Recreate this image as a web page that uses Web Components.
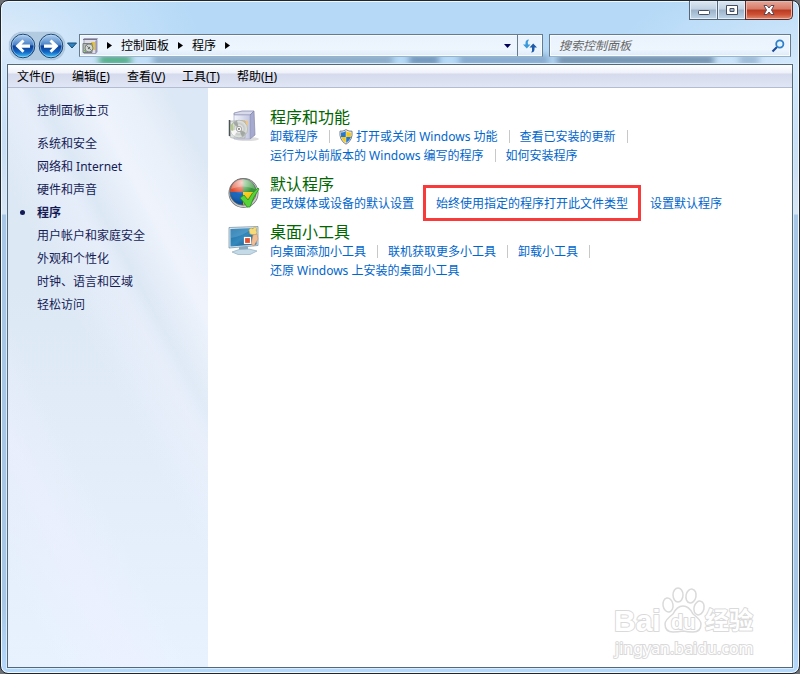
<!DOCTYPE html>
<html lang="zh-CN">
<head>
<meta charset="utf-8">
<title>程序</title>
<style>
    html { background: #6d7074; }
    body {
        margin: 0;
        font: 12px/19px "Noto Sans", "Noto Sans CJK SC", sans-serif;
        color: #000;
    }
</style>
</head>
<body>
<explorer-window>
    <caption-buttons slot="caption"></caption-buttons>
    <nav-bar slot="nav"></nav-bar>
    <menu-bar slot="menu"></menu-bar>
    <side-nav slot="side"></side-nav>

    <category-item icon="programs" heading="程序和功能">
        <link-row trail>
            <task-link>卸载程序</task-link>
            <task-link shield>打开或关闭 Windows 功能</task-link>
            <task-link>查看已安装的更新</task-link>
        </link-row>
        <link-row>
            <task-link>运行为以前版本的 Windows 编写的程序</task-link>
            <task-link>如何安装程序</task-link>
        </link-row>
    </category-item>
    <category-item icon="defaults" heading="默认程序">
        <link-row>
            <task-link>更改媒体或设备的默认设置</task-link>
            <task-link marked>始终使用指定的程序打开此文件类型</task-link>
            <task-link>设置默认程序</task-link>
        </link-row>
    </category-item>
    <category-item icon="gadgets" heading="桌面小工具">
        <link-row trail>
            <task-link>向桌面添加小工具</task-link>
            <task-link>联机获取更多小工具</task-link>
            <task-link>卸载小工具</task-link>
        </link-row>
        <link-row>
            <task-link>还原 Windows 上安装的桌面小工具</task-link>
        </link-row>
    </category-item>
    <site-mark slot="mark"></site-mark>
</explorer-window>

<script>
const ICONS = {
    programs: `<svg viewBox="0 0 32 32">
        <defs><linearGradient id="b" x2="1"><stop stop-color="#f4f5fb"/><stop offset="1" stop-color="#c3c7e0"/></linearGradient>
        <radialGradient id="d"><stop offset=".2" stop-color="#fff"/><stop offset=".6" stop-color="#c6cac7"/><stop offset="1" stop-color="#e8ebe9"/></radialGradient></defs>
        <ellipse cx="19" cy="29" rx="12" ry="2" fill="#bbb" opacity=".5"/>
        <path d="M6 3l8-2h12l-4 4H6z" fill="#d8daea" stroke="#7b80a6" stroke-width=".7"/>
        <path d="M22 5l4-4 1 24-5 4z" fill="#a5aace" stroke="#8388aa" stroke-width=".7"/>
        <path d="M6 5h16v24H6z" fill="url(#b)" stroke="#a3a8c6" stroke-width=".7"/>
        <path d="M13 10l7 1-1 12-4-3z" fill="#f0c680"/>
        <path d="M2 11h15v17H4l-2-1z" fill="#dde1df" opacity=".9" stroke="#909995" stroke-width=".6"/>
        <path d="M1.500 10v16" stroke="#4d5457" stroke-width="1.500"/>
        <ellipse cx="11" cy="19" rx="8.500" ry="8.800" fill="url(#d)" stroke="#a2a9a6" stroke-width=".6"/>
        <path d="M11 19L5 13q2-2 4-2.500zM11 19l7 4q-2 3-4 4z" fill="#8e9491" opacity=".7"/>
        <path d="M11 19l-8 2q1 4 3 5z" fill="#fff" opacity=".8"/>
        <path d="M3 15l2-2v8l-2-1z" fill="#a7c45a" opacity=".7"/>
        <circle cx="11" cy="19" r="2.700" fill="#f5f6f4" stroke="#777" stroke-width=".6"/>
        <circle cx="11" cy="19" r="1" fill="#777"/></svg>`,
    defaults: `<svg viewBox="0 0 32 32">
        <defs><radialGradient id="g" cx=".45" cy=".15" r=".75"><stop stop-color="#fff" stop-opacity=".7"/><stop offset=".6" stop-color="#fff" stop-opacity=".05"/><stop offset="1" stop-color="#000" stop-opacity=".15"/></radialGradient>
        <clipPath id="c"><circle cx="15" cy="15" r="13"/></clipPath></defs>
        <circle cx="15.500" cy="16" r="15" fill="#6c6f72"/><circle cx="15.500" cy="16" r="14.300" fill="#c9cbcc"/>
        <g clip-path="url(#c)"><path d="M0 0h15v15H0z" fill="#e0401f"/><path d="M15 0h17v15H15z" fill="#2e9230"/>
        <path d="M0 15h15v17H0z" fill="#0f5fb8"/><path d="M15 15h17v17H15z" fill="#fbc912"/></g>
        <circle cx="15" cy="15" r="13.200" fill="url(#g)" stroke="#555b5e" stroke-width=".7"/>
        <path d="M3 12Q5 2 15 2t12 10Q15 7 3 12z" fill="#fff" opacity=".25"/>
        <path d="M12 21l4-3 4 5Q24 15 30 11l1 1q-6 8-9 18h-3q-3-5-7-9z" fill="#56d338" stroke="#208d1d" stroke-width=".8"/></svg>`,
    gadgets: `<svg viewBox="0 0 32 32">
        <defs><linearGradient id="s" x2="1" y2="1"><stop stop-color="#1c699f"/><stop offset=".5" stop-color="#3589bd"/><stop offset="1" stop-color="#134a78"/></linearGradient></defs>
        <path d="M1 2.500l29-1v19L1 23z" fill="#dfe9f1" stroke="#6a899f" stroke-width=".7"/>
        <path d="M2.500 4l26-1v16.500l-26 2z" fill="url(#s)"/>
        <path d="M2.500 4l22-1Q16 11 2.500 13z" fill="#8bc8e9" opacity=".3"/>
        <path d="M11 22l9-.5v4h-9z" fill="#87aac2"/><path d="M4 27l7-2.500 10-.5 8 2-7 3.500H10z" fill="#c4dae7" stroke="#91afc1" stroke-width=".7"/>
        <path d="M21 5l2-2 2 1 1-2 3 1-1 2 1 3-2 2-5-1z" fill="#f6db7a" stroke="#d7ab47" stroke-width=".6"/>
        <path d="M25 10l4-1 1 5-4 7-3-2z" fill="#f0bd95" stroke="#c38c67" stroke-width=".5"/>
        <rect x="16.500" y="12.500" width="6" height="6" fill="#e2502f" stroke="#fff" stroke-width="1.200"/></svg>`,
    shield: `<svg viewBox="0 0 16 16">
        <path d="M8 .7q3 2 6 1.500 1 9-6 13-7-4-6-13 3 .5 6-1.500z" fill="#fff" stroke="#6f7b84"/>
        <path d="M7.800 2v6H3V3.500q2.500 0 4.800-1.500z" fill="#2877c9"/><path d="M8.200 2v6H13V3.500q-2.500 0-4.800-1.500z" fill="#f4c81e"/>
        <path d="M3 8h4.800v6Q4 11.500 3 8z" fill="#f4c81e"/><path d="M13 8H8.200v6Q12 11.500 13 8z" fill="#2877c9"/></svg>`,
    panel: `<svg viewBox="0 0 16 16"><path d="M2 .5h13.500L14 3v12.500H2z" fill="#dedde8" stroke="#a3a2b7"/><path d="M1 1.500h14" stroke="#767591"/>
        <path d="M13.500 3l2-1v12l-2 1.500z" fill="#9895ba"/><path d="M9 4h4v8H9z" fill="#e6c13a"/><path d="M1 5.500h9v9H1z" fill="#b5bab7" stroke="#777e7b"/>
        <circle cx="7" cy="10" r="4" fill="#d3d8d4" stroke="#7f8683"/><circle cx="7" cy="10" r="1.200" fill="#5f6663"/><path d="M4 7l3 3M7 10l3 3" stroke="#7e8582"/><path d="M2 12l2 2" stroke="#69b54b"/></svg>`,
};

const define = (name, template) => {
    customElements.define(name, class extends HTMLElement {
        constructor() {
            super();
            this.attachShadow({ mode: 'open' });
        }

        connectedCallback() {
            this.shadowRoot.innerHTML = typeof template === 'function' ? template(this) : template;
        }
    });
};

define('explorer-window', `
    <style>
        :host {
            box-sizing: border-box;
            display: flex;
            flex-direction: column;
            position: relative;
            min-height: 100vh;
            padding: 0 6px 5px;
            border: 1px solid #20262d;
            border-radius: 8px;
            overflow: hidden;
            background:
                radial-gradient(ellipse 200px 110px at 0 40px, #dcebfa 0, transparent 100%),
                radial-gradient(ellipse 190px 100px at 100% 70px, #d5e9fb 0, transparent 100%),
                linear-gradient(#b5d9f7 0, #b5d9f7 60px, #c6ddf4 140px, #d8e6f4 213px, #a8c6e5 214px, #a8c6e5 600px, #b5d9fc 100%);
            box-shadow: inset 0 0 0 1px #eff8ff;
        }
        header { display: flex; justify-content: flex-end; height: 33px; }
        /* what shows through the glass from behind the window */
        .ghost {
            position: absolute;
            left: 98px;
            right: 40px;
            top: 54px;
            height: 10px;
            filter: blur(3px);
            background: linear-gradient(90deg, #4eac83 0 32px, transparent 32px 54px, #89a9c7 54px 294px, transparent 294px 310px, #6f93b8 310px 340px, transparent 340px 360px, #83a7cb 360px 450px, transparent 450px 458px, #708fad 458px 615px, transparent 615px 640px, #9ab8d5 640px);
        }
        .client {
            position: relative;
            flex: 1;
            display: flex;
            flex-direction: column;
            margin-top: 7px;
            border: 1px solid #536878;
            box-shadow: 0 0 0 1px #d8ecfc;
            background: #fff;
        }
        .body { flex: 1; display: flex; }
        main { flex: 1; display: flex; flex-direction: column; gap: 9px; padding: 19px 20px; }
        ::slotted([slot="nav"]) { position: relative; }
    </style>
    <div class="ghost"></div>
    <header><slot name="caption"></slot></header>
    <slot name="nav"></slot>
    <div class="client">
        <slot name="menu"></slot>
        <div class="body">
            <slot name="side"></slot>
            <main><slot></slot></main>
        </div>
        <slot name="mark"></slot>
    </div>
`);

define('caption-buttons', `
    <style>
        :host { display: flex; align-self: flex-start; }
        button {
            display: grid;
            place-items: center;
            width: 28px;
            height: 19px;
            padding: 0;
            border: 1px solid #566676;
            border-top: 0;
            border-right: 0;
            background: linear-gradient(#dce8f3, #c1d1e1 45%, #9cb2c8 50%, #bfd5e9);
            box-shadow: inset 0 0 0 1px #e2eff9;
        }
        button:first-child { border-radius: 0 0 0 5px; }
        .close {
            width: 48px;
            border-right: 1px solid #592b29;
            border-color: #592b29;
            border-radius: 0 0 5px 0;
            background: linear-gradient(#e7a798, #d77a67 45%, #b83b21 50%, #ce5035 75%, #dd8b70);
            box-shadow: inset 0 0 0 1px #ecb6a8;
        }
        svg { width: 14px; height: 12px; }
    </style>
    <button aria-label="最小化"><svg viewBox="0 0 14 12"><rect x="1.500" y="6.500" width="11" height="4" rx="1" fill="#fff" stroke="#454d60"/></svg></button>
    <button aria-label="最大化"><svg viewBox="0 0 14 12"><path fill-rule="evenodd" d="M1.500 1.500h11v9h-11zM5 4.500h4v3H5z" fill="#fff" stroke="#454d60"/></svg></button>
    <button class="close" aria-label="关闭"><svg viewBox="0 0 14 12"><path d="M2 1.500h3L7 4l2-2.500h3L9.500 6l2.500 4.500H9L7 8l-2 2.500H2L4.500 6z" fill="#fff" stroke="#574b59"/></svg></button>
`);

define('nav-bar', `
    <style>
        :host { display: flex; align-items: center; height: 23px; padding: 0 2px; }
        button { padding: 0; border: 0; background: none; font: inherit; color: inherit; display: grid; place-items: center; }
        .travel { display: flex; gap: 2px; padding: 1px; margin: -3px 0; border-radius: 14px; background: #b3cbe0; box-shadow: 0 0 1px #7f9ab4; }
        .travel svg { width: 26px; height: 26px; display: block; }
        .recent { width: 14px; height: 20px; }
        .address, .search {
            box-sizing: border-box;
            display: flex;
            align-items: center;
            height: 23px;
            border: 1px solid #657b8e;
            border-bottom-color: #9ab2c6;
            background: linear-gradient(#eaf3fd, #edf5fd 70%, #dceafa);
            box-shadow: inset 0 0 0 1px #f8fbff;
        }
        .address { flex: 1; margin-right: 6px; }
        .place { width: 16px; height: 16px; margin-left: 2px; }
        .place svg { display: block; }
        .crumb { margin-left: 9px; }
        .arrow { width: 5px; height: 7px; margin-left: 9px; background: #000; clip-path: polygon(0 0, 100% 50%, 0 100%); }
        .drop { width: 20px; height: 21px; margin-left: auto; }
        .refresh { width: 25px; height: 21px; border-left: 1px solid #657b8e; }
        .search { width: 242px; padding: 0 5px 0 9px; }
        input { flex: 1; min-width: 0; padding: 0; border: 0; outline: 0; background: none; font: italic 12px/19px "Noto Sans", "Noto Sans CJK SC", sans-serif; }
        input::placeholder { color: #666; opacity: 1; }
    </style>
    <div class="travel">
        <button aria-label="后退"><svg viewBox="0 0 26 26">
            <defs><linearGradient id="o" y2="1" x2="0"><stop stop-color="#b5d2f0"/><stop offset=".45" stop-color="#4a82c8"/><stop offset=".5" stop-color="#0d3d92"/><stop offset=".75" stop-color="#1265c5"/><stop offset="1" stop-color="#48cefa"/></linearGradient></defs>
            <circle cx="13" cy="13" r="11.800" fill="url(#o)" stroke="#17406f"/><circle cx="13" cy="13" r="10.900" fill="none" stroke="#bde2fa" stroke-width=".8" opacity=".7"/>
            <path d="M5.500 13l7-6.500 2 2-3 3H20v3.200h-8.500l3 3-2 2z" fill="#fff"/></svg></button>
        <button aria-label="前进"><svg viewBox="0 0 26 26">
            <circle cx="13" cy="13" r="11.800" fill="url(#o)" stroke="#17406f"/><circle cx="13" cy="13" r="10.900" fill="none" stroke="#bde2fa" stroke-width=".8" opacity=".7"/>
            <path d="M20.500 13l-7-6.500-2 2 3 3H6v3.200h8.500l-3 3 2 2z" fill="#fff"/></svg></button>
    </div>
    <button class="recent" aria-label="最近的页面"><svg width="10" height="7"><path d="M.5 1h9L5 6z" fill="#2f83c5" stroke="#174e79"/></svg></button>
    <div class="address">
        <span class="place">${ICONS.panel}</span>
        <span class="arrow"></span><button class="crumb">控制面板</button>
        <span class="arrow"></span><button class="crumb">程序</button>
        <span class="arrow"></span>
        <button class="drop" aria-label="以前的位置"><svg width="7" height="4"><path d="M0 0h7L3.500 4z" fill="#000058"/></svg></button>
        <button class="refresh" aria-label="刷新"><svg width="14" height="14" viewBox="0 0 14 14">
            <path d="M6 .5Q2.500.5 2.500 4v1.500H0L3.800 9.500 7.500 5.500H5Q4.500 2 6 .5z" fill="#3a9bdb"/><path d="M8 13.500q3.500 0 3.500-3.500V8.500H14L10.200 4.500 6.500 8.500H9q.5 3.500-1 5z" fill="#1f5ba9"/></svg></button>
    </div>
    <label class="search">
        <input type="search" placeholder="搜索控制面板" aria-label="搜索控制面板">
        <svg width="14" height="14" viewBox="0 0 14 14"><path d="M6 8l-4.500 4.500" stroke="#1d4a96" stroke-width="2.200"/><circle cx="8.800" cy="5" r="3.600" fill="#e3f4ff" stroke="#2f80c8" stroke-width="1.800"/></svg>
    </label>
`);

define('menu-bar', () => `
    <style>
        :host {
            display: flex;
            gap: 16px;
            height: 22px;
            padding-left: 9px;
            border-bottom: 1px solid #b3bdd1;
            background: linear-gradient(#fff 0, #eef1f9 8px, #d5daed 9px, #e1e6f5 100%);
        }
        button { min-width: 39px; padding: 0; border: 0; background: none; font: inherit; line-height: 23px; color: #000; text-align: left; }
    </style>
    ${[['文件', 'F'], ['编辑', 'E'], ['查看', 'V'], ['工具', 'T'], ['帮助', 'H']]
        .map(([text, key]) => `<button>${text}(<u>${key}</u>)</button>`).join('')}
`);

define('side-nav', () => `
    <style>
        :host {
            box-sizing: border-box;
            width: 200px;
            padding: 11px 0 0 12px;
            background:
                linear-gradient(62deg, transparent 10%, rgba(240,240,255,.5) 24%, transparent 36%, transparent 50%, rgba(240,243,255,.5) 62%, transparent 66%, rgba(246,248,255,.7) 76%, rgba(246,248,255,.5) 84%, transparent 92%),
                linear-gradient(#dce8f5, #dde8f5 200px, #e1ecf8 340px, #e8f2ff);
        }
        ul { margin: 0; padding: 0; list-style: none; }
        li { display: grid; grid-template-columns: 17px 1fr; align-items: center; height: 23px; }
        li:first-child { margin-bottom: 10px; }
        a { grid-column: 2; color: #151c55; text-decoration: none; }
        .here { font-weight: bold; }
        .here::before { content: ""; width: 5px; height: 5px; border-radius: 50%; background: #151c55; }
    </style>
    <nav><ul>
        ${['控制面板主页', '系统和安全', '网络和 Internet', '硬件和声音', '程序', '用户帐户和家庭安全', '外观和个性化', '时钟、语言和区域', '轻松访问']
            .map(t => `<li${t === '程序' ? ' class="here"' : ''}><a href="#">${t}</a></li>`).join('')}
    </ul></nav>
`);

define('category-item', el => `
    <style>
        :host { display: grid; grid-template-columns: 32px 1fr; column-gap: 10px; }
        .icon { height: 32px; margin: 3px 0 -4px; }
        h2 { margin: 0; font-size: 16px; line-height: 20px; font-weight: normal; }
        h2 a { color: #006600; text-decoration: none; }
    </style>
    <div class="icon">${ICONS[el.getAttribute('icon')]}</div>
    <div>
        <h2><a href="#">${el.getAttribute('heading')}</a></h2>
        <slot></slot>
    </div>
`);

define('link-row', `
    <style>
        :host { display: flex; height: 19px; }
        ::slotted(:not(:first-child)) { padding-left: 11px; margin-left: 11px; background: linear-gradient(#c8c8c8, #c8c8c8) 0 3px / 1px 13px no-repeat; }
        :host([trail])::after { content: ""; width: 1px; height: 13px; margin: 3px 0 0 11px; background: #c8c8c8; }
    </style>
    <slot></slot>
`);

define('task-link', el => `
    <style>
        :host { display: block; white-space: nowrap; }
        a { position: relative; display: flex; align-items: center; color: #0066cc; text-decoration: none; }
        svg { width: 16px; height: 16px; margin: 0 2px 0 -2px; }
        /* red frame around the task being pointed out */
        :host([marked]) a::after { content: ""; position: absolute; inset: -9px -13px -8px; border: 3px solid #f93a3a; }
    </style>
    <a href="#">${el.hasAttribute('shield') ? ICONS.shield : ''}<slot></slot></a>
`);

define('site-mark', `
    <style>
        :host { position: absolute; right: 35px; bottom: 8px; width: 144px; }
        svg { display: block; width: 144px; height: 50px; }
        .word { fill: #fff; stroke: #dadada; paint-order: stroke; stroke-width: 2px; stroke-linejoin: round; font-weight: bold; }
        .site { margin-left: 2px; font-size: 16px; line-height: 22px; color: #fff; -webkit-text-stroke: 2px #dadada; paint-order: stroke fill; }
    </style>
    <svg viewBox="0 0 144 50">
        <g fill="#fff" stroke="#dadada" stroke-width="1.500">
            <ellipse cx="55" cy="18" rx="5" ry="7" transform="rotate(-10 55 18)"/><ellipse cx="65" cy="8" rx="5" ry="7"/>
            <ellipse cx="78" cy="9" rx="5" ry="7" transform="rotate(12 78 9)"/><ellipse cx="86" cy="21" rx="5" ry="7" transform="rotate(14 86 21)"/>
            <path d="M70 19q6 0 10 8 8 6 8 10 0 8-8 8-5 0-10-1-5 1-10 1-8 0-8-8 0-4 8-10 4-8 10-8z"/>
        </g>
        <text class="word" x="1" y="44" font-family="Liberation Sans, sans-serif" font-size="30">Bai</text>
        <text class="word" x="58" y="42" font-family="Liberation Sans, sans-serif" font-size="20">du</text>
        <text class="word" x="92" y="42" font-family="Noto Sans CJK SC, sans-serif" font-size="24">经验</text>
    </svg>
    <div class="site">jingyan.baidu.com</div>
`);
</script>
</body>
</html>
